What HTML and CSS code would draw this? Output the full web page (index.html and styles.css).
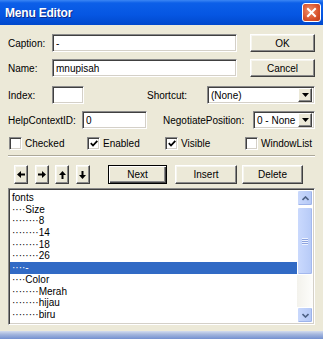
FILE: index.html
```html
<!DOCTYPE html>
<html lang="en">
<head>
  <meta charset="UTF-8" />
  <title>Menu Editor</title>
  <link rel="stylesheet" href="styles.css">
</head>
<body>
  <div class="window">
    <div class="titlebar">
      <span class="title">Menu Editor</span>
      <span class="close-btn">
        <svg width="11" height="11" viewBox="0 0 11 11"><path d="M2 2 L9 9 M9 2 L2 9" stroke="#fff" stroke-width="2" stroke-linecap="square"/></svg>
      </span>
    </div>

    <div class="dialog">
      <!-- text fields -->
      <div class="row">
        <span class="lbl lbl-main">Caption:</span>
        <input class="textbox tb-wide" type="text" value="-">
        <button class="btn btn-side">OK</button>
      </div>

      <div class="row row-name">
        <span class="lbl lbl-main">Name:</span>
        <input class="textbox tb-wide" type="text" value="mnupisah">
        <button class="btn btn-side">Cancel</button>
      </div>

      <div class="row row-index">
        <span class="lbl lbl-main">Index:</span>
        <input class="textbox tb-index" type="text" value="">
        <span class="lbl lbl-shortcut">Shortcut:</span>
        <div class="combo combo-shortcut">
          <span class="combo-text">(None)</span>
          <span class="combo-btn"><svg width="7" height="4" viewBox="0 0 7 4"><path d="M0 0 H7 L3.5 4 Z" fill="#000"/></svg></span>
        </div>
      </div>

      <div class="row row-help">
        <span class="lbl lbl-help">HelpContextID:</span>
        <input class="textbox tb-help" type="text" value="0">
        <span class="lbl lbl-negotiate">NegotiatePosition:</span>
        <div class="combo combo-negotiate">
          <span class="combo-text">0 - None</span>
          <span class="combo-btn"><svg width="7" height="4" viewBox="0 0 7 4"><path d="M0 0 H7 L3.5 4 Z" fill="#000"/></svg></span>
        </div>
      </div>

      <!-- checkboxes -->
      <div class="checks">
        <div class="check"><span class="check-box"></span><span>Checked</span></div>
        <div class="check"><span class="check-box"><svg width="8" height="7" viewBox="0 0 8 7"><path d="M0.8 3.2 L3 5.5 L7.3 0.8" fill="none" stroke="#000" stroke-width="1.8"/></svg></span><span>Enabled</span></div>
        <div class="check"><span class="check-box"><svg width="8" height="7" viewBox="0 0 8 7"><path d="M0.8 3.2 L3 5.5 L7.3 0.8" fill="none" stroke="#000" stroke-width="1.8"/></svg></span><span>Visible</span></div>
        <div class="check"><span class="check-box"></span><span>WindowList</span></div>
      </div>

      <div class="separator"></div>

      <!-- arrows and actions -->
      <div class="actions">
        <button class="btn btn-arrow"><svg width="8" height="7" viewBox="0 0 8 7"><path d="M0 3.5 L4 0 V2.5 H8 V4.5 H4 V7 Z" fill="#000"/></svg></button>
        <button class="btn btn-arrow"><svg width="8" height="7" viewBox="0 0 8 7"><path d="M8 3.5 L4 0 V2.5 H0 V4.5 H4 V7 Z" fill="#000"/></svg></button>
        <button class="btn btn-arrow"><svg width="7" height="8" viewBox="0 0 7 8"><path d="M3.5 0 L7 4 H4.5 V8 H2.5 V4 H0 Z" fill="#000"/></svg></button>
        <button class="btn btn-arrow"><svg width="7" height="8" viewBox="0 0 7 8"><path d="M3.5 8 L7 4 H4.5 V0 H2.5 V4 H0 Z" fill="#000"/></svg></button>
        <button class="btn btn-next">Next</button>
        <button class="btn btn-insert">Insert</button>
        <button class="btn btn-delete">Delete</button>
      </div>

      <!-- menu list -->
      <div class="listbox">
        <ul class="items">
          <li>fonts</li>
          <li>····Size</li>
          <li>········8</li>
          <li>········14</li>
          <li>········18</li>
          <li>········26</li>
          <li class="selected">····-</li>
          <li>····Color</li>
          <li>········Merah</li>
          <li>········hijau</li>
          <li>········biru</li>
        </ul>
        <div class="scrollbar">
          <span class="sb-btn"><svg width="7" height="5" viewBox="0 0 7 5"><path d="M0.5 4 L3.5 1 L6.5 4" fill="none" stroke="#4d6185" stroke-width="1.6"/></svg></span>
          <span class="sb-thumb"><span class="grip"></span></span>
          <span class="sb-track"></span>
          <span class="sb-btn"><svg width="7" height="5" viewBox="0 0 7 5"><path d="M0.5 1 L3.5 4 L6.5 1" fill="none" stroke="#4d6185" stroke-width="1.6"/></svg></span>
        </div>
      </div>
    </div>

    <div class="frame-bottom"></div>
  </div>
</body>
</html>
```

FILE: styles.css
```css
* { margin: 0; padding: 0; box-sizing: border-box; }

body {
  width: 323px;
  height: 339px;
  overflow: hidden;
  background: #ece9d8;
  font-family: "Liberation Sans", Arial, sans-serif;
  font-size: 10px;
  color: #000;
}

.window {
  display: flex;
  flex-direction: column;
  height: 339px;
}

/* title bar */
.titlebar {
  flex: none;
  height: 25px;
  display: flex;
  align-items: center;
  justify-content: space-between;
  padding: 0 2px 0 5px;
  background: linear-gradient(to bottom, #3b86f4 0%, #0c5fe8 12%, #0556e2 60%, #0048cc 100%);
}

.title {
  color: #fff;
  font-weight: bold;
  font-size: 12px;
  letter-spacing: -0.2px;
  text-shadow: 1px 1px #0a2a8a;
}

.close-btn {
  width: 19px;
  height: 19px;
  border: 1px solid #fff;
  border-radius: 3px;
  background: radial-gradient(circle at 40% 40%, #f0906c, #d8522c 60%, #bf3c1a);
  display: flex;
  align-items: center;
  justify-content: center;
}

/* dialog body */
.dialog {
  flex: 1;
  padding: 9px 8px 0 8px;
}

.row {
  display: flex;
  align-items: center;
  height: 18px;
}

.row-name { margin-top: 7px; }
.row-index { margin-top: 9px; }
.row-help { margin-top: 7px; }

.lbl { flex: none; white-space: nowrap; }
.lbl-main { width: 44px; }
.lbl-shortcut { width: 60px; margin-left: 63px; }
.lbl-help { width: 74px; }
.lbl-negotiate { width: 90px; margin-left: 16px; }

.textbox {
  flex: none;
  height: 18px;
  padding: 0 2px;
  font: inherit;
  background: #fff;
  border: 1px solid;
  border-color: #8a8a8a #fff #fff #8a8a8a;
  box-shadow: inset 1px 1px #404040, inset -1px -1px #d4d0c8;
  outline: none;
  padding-left: 3px;
}

.tb-wide { width: 185px; }
.tb-index { width: 32px; }
.tb-help { width: 65px; }

.combo {
  flex: none;
  height: 18px;
  display: flex;
  align-items: center;
  background: #fff;
  border: 1px solid;
  border-color: #8a8a8a #fff #fff #8a8a8a;
  box-shadow: inset 1px 1px #404040, inset -1px -1px #d4d0c8;
  padding: 2px;
}

.combo-shortcut { width: 108px; }
.combo-negotiate { width: 62px; }

.combo-text {
  flex: 1;
  padding-left: 1px;
  white-space: nowrap;
}

.combo-btn {
  width: 14px;
  height: 14px;
  display: flex;
  align-items: center;
  justify-content: center;
  background: #ece9d8;
  border: 1px solid;
  border-color: #fff #404040 #404040 #fff;
  box-shadow: inset -1px -1px #8a8a8a;
}

/* buttons */
.btn {
  flex: none;
  height: 19px;
  font: inherit;
  color: #000;
  background: #ece9d8;
  border: 1px solid;
  border-color: #fff #404040 #404040 #fff;
  box-shadow: inset -1px -1px #8a8a8a, inset 1px 1px #f6f5ef;
  display: flex;
  align-items: center;
  justify-content: center;
}

.btn-side { width: 65px; margin-left: 13px; height: 18px; }

/* checkboxes */
.checks {
  margin-top: 8px;
  height: 13px;
  display: grid;
  grid-template-columns: 78px 78px 80px 1fr;
  padding-left: 1px;
}

.check {
  display: flex;
  align-items: center;
  gap: 3px;
}

.check-box {
  width: 13px;
  height: 13px;
  background: #fff;
  border: 1px solid;
  border-color: #8a8a8a #fff #fff #8a8a8a;
  box-shadow: inset 1px 1px #404040, inset -1px -1px #d4d0c8;
  display: flex;
  align-items: center;
  justify-content: center;
}

.separator {
  margin-top: 5px;
  height: 2px;
  border-top: 1px solid #aca899;
  border-bottom: 1px solid #fff;
}

/* arrow and action buttons */
.actions {
  margin-top: 8px;
  display: flex;
  align-items: center;
  padding-left: 6px;
}

.btn-arrow { width: 14px; margin-right: 6.5px; }
.btn-arrow:nth-child(4) { margin-right: 0; }

.btn-next {
  width: 59px;
  margin-left: 18.5px;
  border: 1px solid #000;
  box-shadow: inset 1px 1px #fff, inset -1px -1px #404040, inset -2px -2px #8a8a8a;
}

.btn-insert { width: 62px; margin-left: 8px; }
.btn-delete { width: 61px; margin-left: 5px; }

/* list of menu items */
.listbox {
  margin-top: 4px;
  height: 137px;
  display: flex;
  background: #fff;
  border: 1px solid;
  border-color: #8a8a8a #fff #fff #8a8a8a;
  box-shadow: inset 1px 1px #404040, inset -1px -1px #d4d0c8;
  padding: 1px;
}

.items {
  flex: 1;
  list-style: none;
  padding-top: 2px;
}

.items li {
  height: 11.7px;
  line-height: 11.7px;
  padding-left: 2px;
  white-space: pre;
}

.items li.selected {
  background: #316ac5;
  color: #fff;
}

.scrollbar {
  width: 16px;
  display: flex;
  flex-direction: column;
}

.sb-btn {
  width: 16px;
  height: 16px;
  display: flex;
  align-items: center;
  justify-content: center;
  border: 1px solid #fff;
  border-radius: 2px;
  background: linear-gradient(to right, #c9d8fc, #b4c8f6);
  box-shadow: inset -1px -1px #9db3ea;
}

.sb-thumb {
  margin-top: 1px;
  height: 68px;
  display: flex;
  align-items: center;
  justify-content: center;
  border: 1px solid #fff;
  border-radius: 2px;
  background: linear-gradient(to right, #cad9fd, #b6caf7);
  box-shadow: inset -1px -1px #a3b8ee;
}

.grip {
  width: 6px;
  height: 7px;
  background: repeating-linear-gradient(to bottom, #eef3ff 0 1px, #8ca3de 1px 2px);
}

.sb-track {
  flex: 1;
  background: linear-gradient(to right, #f3f2ec, #fdfdfb);
}

.frame-bottom {
  flex: none;
  height: 8px;
  background: linear-gradient(to bottom, #d3dcee, #a6b8de 40%, #7390d0);
}
```
